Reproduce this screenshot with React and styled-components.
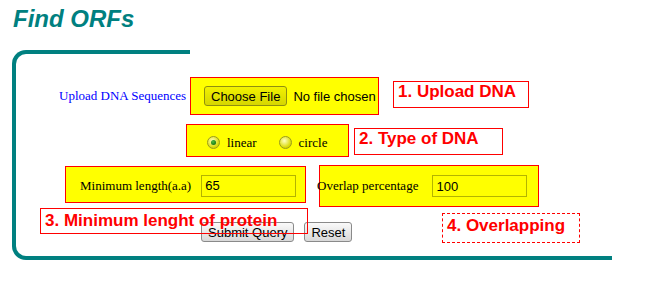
import * as React from 'react'
import styled, { createGlobalStyle } from 'styled-components'

const GlobalStyle = createGlobalStyle`
  html, body {
    margin: 0;
    padding: 0;
    background: #ffffff;
  }
  body {
    font-family: "Liberation Serif", "Times New Roman", serif;
    font-size: 13px;
  }
`

const Page = styled.div`
  padding: 5px 0 0 12px;
  width: 600px;
`

const Title = styled.h1`
  margin: 0 0 17px 1px;
  font-family: "Liberation Sans", Arial, sans-serif;
  font-size: 24px;
  font-style: italic;
  font-weight: bold;
  line-height: 28px;
  color: #008080;
`

const Frame = styled.div`
  display: flex;
  flex-direction: column;
`

const FrameTop = styled.div`
  width: 174px;
  height: 10px;
  border-top: 4px solid #008080;
  border-left: 4px solid #008080;
  border-top-left-radius: 14px;
`

const FrameBottom = styled.div`
  width: 596px;
  height: 10px;
  border-bottom: 4px solid #008080;
  border-left: 4px solid #008080;
  border-bottom-left-radius: 14px;
`

const FrameBody = styled.div`
  position: relative;
  height: 182px;
  box-sizing: border-box;
  padding-top: 13px;
  border-left: 4px solid #008080;
  display: flex;
  flex-direction: column;
`

const Row = styled.div`
  display: flex;
  align-items: ${(p) => p.$align || 'center'};
  padding-left: ${(p) => p.$indent}px;
  margin-top: ${(p) => p.$top || 0}px;
  gap: ${(p) => p.$gap || 0}px;
  & > * {
    flex-shrink: 0;
  }
`

const Label = styled.span`
  flex-shrink: 0;
  color: ${(p) => p.$color || '#000000'};
  white-space: nowrap;
  margin-left: ${(p) => p.$shift || 0}px;
`

const Highlight = styled.div`
  display: flex;
  flex-shrink: 0;
  align-items: center;
  box-sizing: border-box;
  width: ${(p) => p.$w}px;
  height: ${(p) => p.$h}px;
  margin-top: ${(p) => p.$top || 0}px;
  padding: ${(p) => p.$pad};
  gap: ${(p) => p.$gap || 0}px;
  background: #ffff00;
  border: 1px solid #ff0000;
  & > * {
    flex-shrink: 0;
  }
`

const Note = styled.div`
  box-sizing: border-box;
  width: ${(p) => p.$w}px;
  height: ${(p) => p.$h}px;
  padding: ${(p) => p.$pad || '0 0 0 4px'};
  border: 1px ${(p) => (p.$dashed ? 'dashed' : 'solid')} #ff0000;
  color: #ff0000;
  font-family: "Liberation Sans", Arial, sans-serif;
  font-size: 17px;
  font-weight: bold;
  line-height: 20px;
  white-space: nowrap;
`

const OverNote = styled(Note)`
  position: absolute;
  left: ${(p) => p.$x}px;
  top: ${(p) => p.$y}px;
  background: transparent;
`

const FileButton = styled.button`
  height: 20px;
  padding: 0 6px;
  white-space: nowrap;
  font-family: "Liberation Sans", Arial, sans-serif;
  font-size: 13px;
  color: #000000;
  background: linear-gradient(#f2f200, #d6d600);
  border: 1px solid #8f8f10;
  border-radius: 3px;
`

const PlainText = styled.span`
  font-family: "Liberation Sans", Arial, sans-serif;
  font-size: 13px;
  color: #000000;
  white-space: nowrap;
`

const RadioGroup = styled.label`
  display: flex;
  align-items: center;
  gap: 7px;
  margin-right: ${(p) => p.$after || 0}px;
`

const RadioDot = styled.span`
  position: relative;
  width: 11px;
  height: 11px;
  border-radius: 50%;
  border: 1px solid #9a9a20;
  background: radial-gradient(circle at 40% 35%, #ffffc0, #d8d800 70%);
  &::after {
    content: '';
    display: ${(p) => (p.$on ? 'block' : 'none')};
    position: absolute;
    left: 3px;
    top: 3px;
    width: 5px;
    height: 5px;
    border-radius: 50%;
    background: radial-gradient(circle at 40% 35%, #4cc040, #0a5a00);
  }
`

const TextInput = styled.input`
  box-sizing: border-box;
  width: 95px;
  height: 22px;
  padding: 0 3px;
  font-family: "Liberation Sans", Arial, sans-serif;
  font-size: 13px;
  color: #000000;
  background: #ffff00;
  border: 1px solid #b4b400;
  outline: none;
`

const FormButton = styled.button`
  height: 20px;
  padding: 0 6px;
  white-space: nowrap;
  font-family: "Liberation Sans", Arial, sans-serif;
  font-size: 13px;
  color: #000000;
  background: linear-gradient(#fafafa, #d8d8d8);
  border: 1px solid #8a8a8a;
  border-radius: 3px;
`

export default function App() {
  return (
    <>
      <GlobalStyle />
      <Page>
        <Title>Find ORFs</Title>
        <Frame>
          <FrameTop />
          <FrameBody>
            <Row $indent={43}>
              <Label $color="#0000ff" style={{ width: 131 }}>Upload DNA Sequences</Label>
              <Highlight $w={189} $h={38} $pad="0 4px 0 13px" $gap={6}>
                <FileButton type="button">Choose File</FileButton>
                <PlainText>No file chosen</PlainText>
              </Highlight>
              <Note $w={136} $h={27} $pad="0 9px 5px 4px" style={{ marginLeft: 14, marginTop: -4 }}>
                1. Upload DNA
              </Note>
            </Row>

            <Row $indent={170} $top={9} $gap={5} $align="flex-start">
              <Highlight $w={163} $h={33} $pad="4px 0 0 20px">
                <RadioGroup $after={22}>
                  <RadioDot $on />
                  <span>linear</span>
                </RadioGroup>
                <RadioGroup>
                  <RadioDot />
                  <span>circle</span>
                </RadioGroup>
              </Highlight>
              <Note $w={149} $h={27} $pad="0 0 0 4px" style={{ marginTop: 4 }}>
                2. Type of DNA
              </Note>
            </Row>

            <Row $indent={49} $top={8} $gap={13} $align="flex-start">
              <Highlight $w={241} $h={37} $top={1} $pad="2px 10px 0 14px" $gap={10}>
                <Label>Minimum length(a.a)</Label>
                <TextInput defaultValue="65" />
              </Highlight>
              <Highlight $w={220} $h={42} $pad="0 10px 0 0" $gap={14}>
                <Label $shift={-3}>Overlap percentage</Label>
                <TextInput defaultValue="100" />
              </Highlight>
            </Row>

            <Row $indent={185} $top={15} $gap={10}>
              <FormButton type="submit">Submit Query</FormButton>
              <FormButton type="reset">Reset</FormButton>
            </Row>

            <OverNote $x={24} $y={144} $w={268} $h={26} $pad="2px 0 0 4px">
              3. Minimum lenght of protein
            </OverNote>
            <OverNote $x={426} $y={149} $w={138} $h={30} $pad="2px 0 0 4px" $dashed>
              4. Overlapping
            </OverNote>
          </FrameBody>
          <FrameBottom />
        </Frame>
      </Page>
    </>
  )
}
